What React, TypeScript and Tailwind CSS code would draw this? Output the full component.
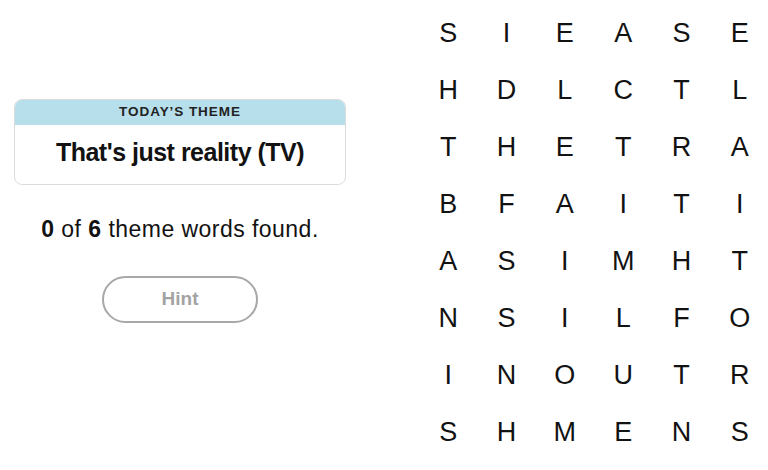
import React from "react";

const rows = [
  "SIEASE",
  "HDLCTL",
  "THETRA",
  "BFAITI",
  "ASIMHT",
  "NSILFO",
  "INOUTR",
  "SHMENS",
];

export default function App() {
  return (
    <div className="w-[768px] h-[470px] bg-white flex text-[#121212] font-['Liberation_Sans',_Arial,_sans-serif] overflow-hidden">
      <div className="w-[360px] px-[14px] pt-[99px] flex flex-col items-center">
        <div className="w-full rounded-[8px] border border-[#dcdcdc] overflow-hidden">
          <div className="bg-[#b6deeb] h-[25px] flex items-center justify-center text-[13.5px] font-bold tracking-[0.07em] text-[#222]">
            TODAY’S THEME
          </div>
          <div className="h-[59px] flex items-center justify-center text-[25px] font-bold tracking-[-0.02em] pb-[3px]">
            That's just reality (TV)
          </div>
        </div>
        <p className="mt-[30px] text-[23px] leading-[28px] tracking-[0.02em]">
          <span className="font-bold">0</span> of <span className="font-bold">6</span> theme words found.
        </p>
        <button className="mt-[33px] w-[156px] h-[47px] rounded-full border-2 border-[#a8a8a8] text-[#a3a3a3] text-[19px] font-bold">
          Hint
        </button>
      </div>
      <div className="ml-auto mr-[-1px] w-[350px] pt-[5px] self-start grid grid-cols-6 content-start">
        {rows.map((row, r) =>
          row.split("").map((ch, c) => (
            <div
              key={`${r}-${c}`}
              className="h-[57px] flex items-center justify-center text-[27px] leading-none"
            >
              {ch}
            </div>
          ))
        )}
      </div>
    </div>
  );
}
